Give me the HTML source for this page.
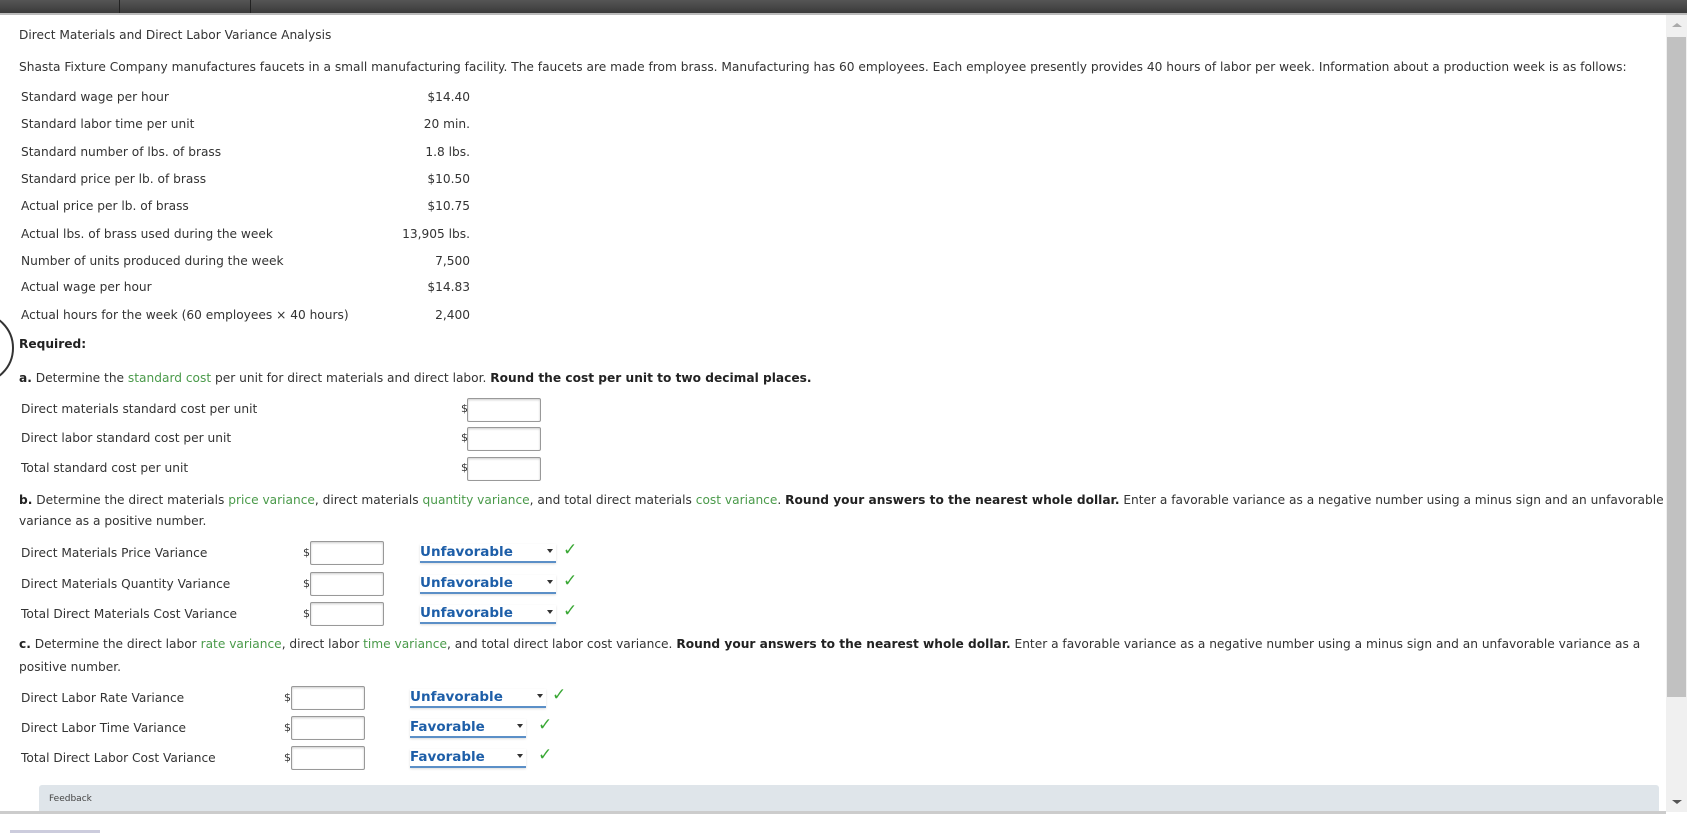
<!DOCTYPE html>
<html><head><style>
body{margin:0;width:1687px;height:833px;overflow:hidden;background:#fff;font-family:"DejaVu Sans","Liberation Sans",sans-serif;font-size:12.2px;color:#333;position:relative}
.a{position:absolute;white-space:nowrap}
.g{color:#4a9a4a}
b{color:#222}
.r{text-align:right}
.in{position:absolute;border:1px solid #999;border-radius:2px;height:22px;box-shadow:inset 0 1px 2px #ccc;background:#fff}
.sel{position:absolute;color:#1d5ea8;font-weight:bold;border-bottom:2px solid #5b8fc7;height:17px;font-size:13.5px;box-shadow:0 1px 2px #ddd}
.sel:after{content:"";position:absolute;right:3px;top:5px;border-left:3px solid transparent;border-right:3px solid transparent;border-top:4px solid #333}
.ck{position:absolute;color:#3aa835;font-size:17px;font-weight:bold}
</style></head><body>
<div style="position:absolute;left:0;top:0;width:1687px;height:13px;background:linear-gradient(#555,#3a3a3a);border-bottom:2px solid #bbb"></div>
<div style="position:absolute;left:119px;top:0;width:1px;height:13px;background:#222"></div>
<div style="position:absolute;left:250px;top:0;width:1px;height:13px;background:#222"></div>
<div style="position:absolute;left:-58px;top:312px;width:68px;height:68px;border:2px solid #333;border-radius:50%"></div>
<div class="a" style="left:19px;top:28px">Direct Materials and Direct Labor Variance Analysis</div>
<div class="a" style="left:19px;top:60px">Shasta Fixture Company manufactures faucets in a small manufacturing facility. The faucets are made from brass. Manufacturing has 60 employees. Each employee presently provides 40 hours of labor per week. Information about a production week is as follows:</div>
<div class="a" style="left:21px;top:90px">Standard wage per hour</div><div class="a r" style="left:370px;width:100px;top:90px">$14.40</div>
<div class="a" style="left:21px;top:117px">Standard labor time per unit</div><div class="a r" style="left:370px;width:100px;top:117px">20 min.</div>
<div class="a" style="left:21px;top:145px">Standard number of lbs. of brass</div><div class="a r" style="left:370px;width:100px;top:145px">1.8 lbs.</div>
<div class="a" style="left:21px;top:172px">Standard price per lb. of brass</div><div class="a r" style="left:370px;width:100px;top:172px">$10.50</div>
<div class="a" style="left:21px;top:199px">Actual price per lb. of brass</div><div class="a r" style="left:370px;width:100px;top:199px">$10.75</div>
<div class="a" style="left:21px;top:227px">Actual lbs. of brass used during the week</div><div class="a r" style="left:370px;width:100px;top:227px">13,905 lbs.</div>
<div class="a" style="left:21px;top:254px">Number of units produced during the week</div><div class="a r" style="left:370px;width:100px;top:254px">7,500</div>
<div class="a" style="left:21px;top:280px">Actual wage per hour</div><div class="a r" style="left:370px;width:100px;top:280px">$14.83</div>
<div class="a" style="left:21px;top:308px">Actual hours for the week (60 employees × 40 hours)</div><div class="a r" style="left:370px;width:100px;top:308px">2,400</div>
<div class="a" style="left:19px;top:337px"><b>Required:</b></div>
<div class="a" style="left:19px;top:371px"><b>a.</b> Determine the <span class="g">standard cost</span> per unit for direct materials and direct labor. <b>Round the cost per unit to two decimal places.</b></div>
<div class="a" style="left:21px;top:402px">Direct materials standard cost per unit</div>
<div class="a" style="left:21px;top:431px">Direct labor standard cost per unit</div>
<div class="a" style="left:21px;top:461px">Total standard cost per unit</div>
<div class="a" style="left:461px;top:402px;font-size:11px">$</div><div class="in" style="left:467px;top:398px;width:72px"></div>
<div class="a" style="left:461px;top:431px;font-size:11px">$</div><div class="in" style="left:467px;top:427px;width:72px"></div>
<div class="a" style="left:461px;top:461px;font-size:11px">$</div><div class="in" style="left:467px;top:457px;width:72px"></div>
<div class="a" style="left:19px;top:493px"><b>b.</b> Determine the direct materials <span class="g">price variance</span>, direct materials <span class="g">quantity variance</span>, and total direct materials <span class="g">cost variance</span>. <b>Round your answers to the nearest whole dollar.</b> Enter a favorable variance as a negative number using a minus sign and an unfavorable</div>
<div class="a" style="left:19px;top:514px">variance as a positive number.</div>
<div class="a" style="left:21px;top:546px">Direct Materials Price Variance</div>
<div class="a" style="left:21px;top:577px">Direct Materials Quantity Variance</div>
<div class="a" style="left:21px;top:607px">Total Direct Materials Cost Variance</div>
<div class="a" style="left:303px;top:546px;font-size:11px">$</div><div class="in" style="left:310px;top:541px;width:72px"></div>
<div class="a" style="left:303px;top:577px;font-size:11px">$</div><div class="in" style="left:310px;top:572px;width:72px"></div>
<div class="a" style="left:303px;top:607px;font-size:11px">$</div><div class="in" style="left:310px;top:602px;width:72px"></div>
<div class="sel" style="left:420px;top:544px;width:136px">Unfavorable</div><div class="ck" style="left:563px;top:540px">✓</div>
<div class="sel" style="left:420px;top:575px;width:136px">Unfavorable</div><div class="ck" style="left:563px;top:571px">✓</div>
<div class="sel" style="left:420px;top:605px;width:136px">Unfavorable</div><div class="ck" style="left:563px;top:601px">✓</div>
<div class="a" style="left:19px;top:637px"><b>c.</b> Determine the direct labor <span class="g">rate variance</span>, direct labor <span class="g">time variance</span>, and total direct labor cost variance. <b>Round your answers to the nearest whole dollar.</b> Enter a favorable variance as a negative number using a minus sign and an unfavorable variance as a</div>
<div class="a" style="left:19px;top:660px">positive number.</div>
<div class="a" style="left:21px;top:691px">Direct Labor Rate Variance</div>
<div class="a" style="left:21px;top:721px">Direct Labor Time Variance</div>
<div class="a" style="left:21px;top:751px">Total Direct Labor Cost Variance</div>
<div class="a" style="left:284px;top:691px;font-size:11px">$</div><div class="in" style="left:291px;top:686px;width:72px"></div>
<div class="a" style="left:284px;top:721px;font-size:11px">$</div><div class="in" style="left:291px;top:716px;width:72px"></div>
<div class="a" style="left:284px;top:751px;font-size:11px">$</div><div class="in" style="left:291px;top:746px;width:72px"></div>
<div class="sel" style="left:410px;top:689px;width:136px">Unfavorable</div><div class="ck" style="left:552px;top:685px">✓</div>
<div class="sel" style="left:410px;top:719px;width:116px">Favorable</div><div class="ck" style="left:538px;top:715px">✓</div>
<div class="sel" style="left:410px;top:749px;width:116px">Favorable</div><div class="ck" style="left:538px;top:745px">✓</div>
<div style="position:absolute;left:39px;top:785px;width:1620px;height:27px;background:#dfe5ea;border-radius:3px 3px 0 0"></div>
<div class="a" style="left:49px;top:794px;font-size:9px;color:#444">Feedback</div>
<div style="position:absolute;left:0;top:811px;width:1666px;height:3px;background:#ccc"></div>
<div style="position:absolute;left:1666px;top:15px;width:21px;height:797px;background:#f0f0f0"></div>
<div style="position:absolute;left:1667px;top:37px;width:19px;height:660px;background:#c1c1c1"></div>
<div style="position:absolute;left:1672px;top:23px;border-left:5px solid transparent;border-right:5px solid transparent;border-bottom:4px solid #aaa"></div>
<div style="position:absolute;left:1672px;top:800px;border-left:5px solid transparent;border-right:5px solid transparent;border-top:4px solid #555"></div>
<div style="position:absolute;left:10px;top:830px;width:90px;height:3px;background:#ccd"></div>
</body></html>
